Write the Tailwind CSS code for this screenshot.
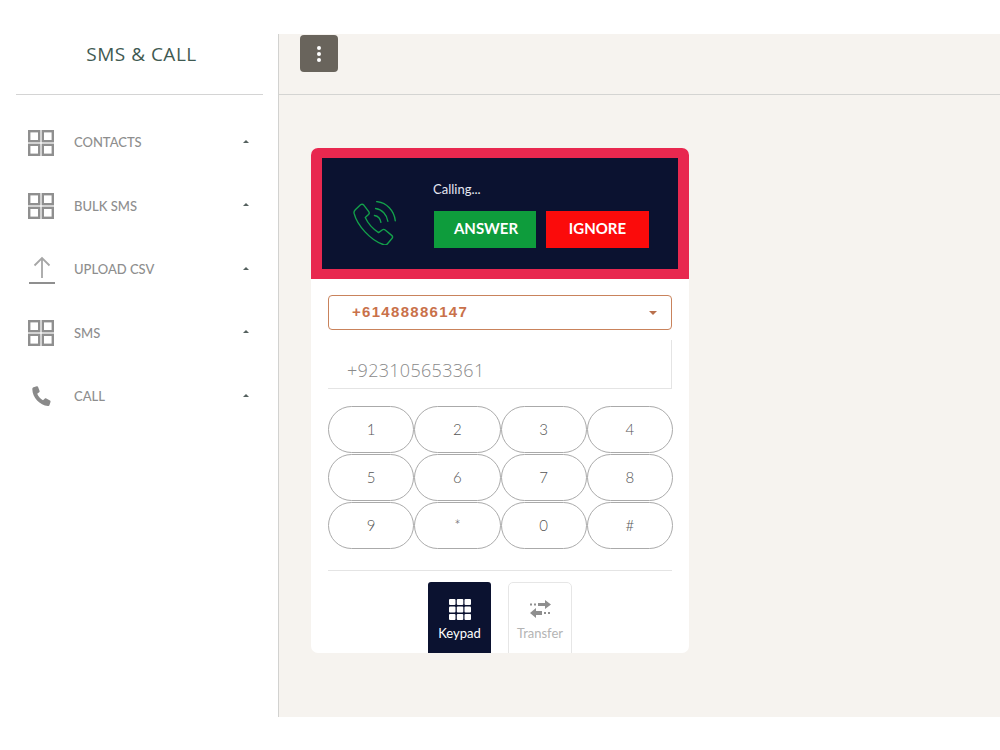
<!DOCTYPE html>
<html lang="en">
<head>
    <meta charset="UTF-8">
    <title>SMS &amp; Call</title>
    <script src="https://cdn.jsdelivr.net/npm/@tailwindcss/browser@4"></script>
</head>
<body class="bg-white font-['Lato',sans-serif]">
    <div class="w-[1000px] h-[750px] pt-[34px] overflow-hidden flex items-start">
        <!-- sidebar -->
        <aside class="w-[278px] h-[683px] shrink-0 px-[16px]">
            <div class="h-[61px] border-b border-[#d4d4d4] flex items-center justify-center pb-[19px] -mr-[1px] pl-[4px]">
                <h1 class="text-[19px] text-[#3f5a52] font-['Open_Sans',sans-serif] tracking-[0.5px]">SMS &amp; CALL</h1>
            </div>
            <nav class="pt-[16px] pl-[12px] pr-[13px] flex flex-col text-[#8e8e8e]">
                <div class="h-[63.5px] flex items-center">
                    <svg class="w-[26px] h-[26px] mr-[20px]" viewBox="0 0 26 26" fill="none" stroke="#8f8f8f" stroke-width="2.400"><rect x="1.200" y="1.200" width="10" height="10"/><rect x="14.800" y="1.200" width="10" height="10"/><rect x="1.200" y="14.800" width="10" height="10"/><rect x="14.800" y="14.800" width="10" height="10"/></svg>
                    <span class="flex-1 text-[13px] font-medium">CONTACTS</span>
                    <span class="w-0 h-0 border-x-[3.5px] border-x-transparent border-b-[3.5px] border-b-[#55615f] mb-[3px]"></span>
                </div>
                <div class="h-[63.5px] flex items-center">
                    <svg class="w-[26px] h-[26px] mr-[20px]" viewBox="0 0 26 26" fill="none" stroke="#8f8f8f" stroke-width="2.400"><rect x="1.200" y="1.200" width="10" height="10"/><rect x="14.800" y="1.200" width="10" height="10"/><rect x="1.200" y="14.800" width="10" height="10"/><rect x="14.800" y="14.800" width="10" height="10"/></svg>
                    <span class="flex-1 text-[13px] font-medium">BULK SMS</span>
                    <span class="w-0 h-0 border-x-[3.5px] border-x-transparent border-b-[3.5px] border-b-[#55615f] mb-[3px]"></span>
                </div>
                <div class="h-[63.5px] flex items-center">
                    <svg class="w-[28px] h-[28px] mr-[18px]" viewBox="0 0 28 28" fill="none" stroke="#a6a6a6"><path d="M14 22V2M6.500 9.500L14 2l7.500 7.500" stroke-width="1.800"/><path d="M1 27h26" stroke-width="2" stroke="#8f8f8f"/></svg>
                    <span class="flex-1 text-[13px] font-medium">UPLOAD CSV</span>
                    <span class="w-0 h-0 border-x-[3.5px] border-x-transparent border-b-[3.5px] border-b-[#55615f] mb-[3px]"></span>
                </div>
                <div class="h-[63.5px] flex items-center">
                    <svg class="w-[26px] h-[26px] mr-[20px]" viewBox="0 0 26 26" fill="none" stroke="#8f8f8f" stroke-width="2.400"><rect x="1.200" y="1.200" width="10" height="10"/><rect x="14.800" y="1.200" width="10" height="10"/><rect x="1.200" y="14.800" width="10" height="10"/><rect x="14.800" y="14.800" width="10" height="10"/></svg>
                    <span class="flex-1 text-[13px] font-medium">SMS</span>
                    <span class="w-0 h-0 border-x-[3.5px] border-x-transparent border-b-[3.5px] border-b-[#55615f] mb-[3px]"></span>
                </div>
                <div class="h-[63.5px] flex items-center">
                    <svg class="w-[26px] h-[26px] mr-[20px]" viewBox="0 0 26 26" fill="#8a8a8a"><path d="M5.500 3.200l3.300-.9c.6-.2 1.100.1 1.300.6l1.500 4c.2.500 0 1-.4 1.300l-2 1.500c1.200 2.800 3.200 5.100 5.800 6.600l1.900-1.700c.4-.3.900-.4 1.400-.1l3.700 2.100c.5.300.7.800.5 1.300l-1 3.100c-.2.700-.9 1.100-1.600 1C11.900 21.200 4.400 13.600 4.300 5c0-.8.500-1.500 1.200-1.800z"/></svg>
                    <span class="flex-1 text-[13px] font-medium">CALL</span>
                    <span class="w-0 h-0 border-x-[3.5px] border-x-transparent border-b-[3.5px] border-b-[#55615f] mb-[3px]"></span>
                </div>
            </nav>
        </aside>

        <!-- main -->
        <main class="flex-1 h-[683px] bg-[#f6f3ef] border-l border-[#d2d2d0]">
            <div class="h-[61px] border-b border-[#d4d4d2] pl-[21px] pt-[1px]">
                <button class="w-[38px] h-[37px] bg-[#69645c] rounded-[4px] flex flex-col items-center justify-center gap-[2px]">
                    <span class="w-[4px] h-[4px] rounded-full bg-white"></span>
                    <span class="w-[4px] h-[4px] rounded-full bg-white"></span>
                    <span class="w-[4px] h-[4px] rounded-full bg-white"></span>
                </button>
            </div>

            <div class="pl-[32px] pt-[53px]">
                <div class="w-[378px] h-[505px] bg-white rounded-[7px] overflow-hidden">
                    <!-- incoming call -->
                    <div class="h-[131px] bg-[#e8284f] px-[11px] pt-[10px]">
                        <div class="h-[111px] bg-[#0b1230] flex">
                            <div class="w-[112px] flex items-center pl-[31px] pt-[18px]">
                                <svg class="w-[44px] h-[44px]" viewBox="1 1 38 38" fill="none" stroke="#13a04a" stroke-width="1.200" stroke-linecap="round" stroke-linejoin="round">
                                    <path d="M3 8.500l4.500-4.200c.9-.8 2-.7 2.800.2l4.300 5.700c.6.800.5 1.800-.2 2.500l-2.800 2.600c1.700 3.700 6.300 9.700 11.500 13l3.100-2.300c.8-.6 1.800-.6 2.600 0l5.600 4.700c.8.700.9 1.900.2 2.700l-3.800 4.500c-.8.900-2.100 1.300-3.200.9C16 35 4.500 22 1.900 11.500c-.2-1.100.3-2.200 1.100-3z"/>
                                    <path d="M19.500 13.500c2.900.5 5.200 3 5.600 6"/>
                                    <path d="M20.500 7.500c5.600.7 9.800 5.300 10.600 11"/>
                                    <path d="M21.500 1.500c8.500.9 15.100 7.700 16 16.500"/>
                                </svg>
                            </div>
                            <div class="pt-[23px]">
                                <p class="text-[13px] leading-[16px] text-[#e6e8f2] -ml-[1px]">Calling...</p>
                                <div class="flex gap-[10px] mt-[14px]">
                                    <button class="w-[102px] h-[37px] bg-[#0e9c3c] text-white text-[15px] font-bold pb-[2px] pl-[2px]">ANSWER</button>
                                    <button class="w-[103px] h-[37px] bg-[#fb0b0b] text-white text-[15px] font-bold pb-[2px]">IGNORE</button>
                                </div>
                            </div>
                        </div>
                    </div>

                    <div class="px-[17px]">
                        <!-- caller id -->
                        <div class="mt-[16px] h-[35px] border border-[#c9835c] rounded-[4px] flex items-center justify-between pl-[23px] pr-[14px]">
                            <span class="font-['Liberation_Sans',sans-serif] text-[15px] font-bold tracking-[1.300px] text-[#c9714a]">+61488886147</span>
                            <span class="w-0 h-0 border-x-[4px] border-x-transparent border-t-[4px] border-t-[#b9704d]"></span>
                        </div>

                        <!-- number -->
                        <div class="mt-[10px] h-[49px] border-b border-r border-[#e4e4e4] flex items-end pl-[19px] pb-[4px] text-[18px] text-[#8a8a8a] font-['Open_Sans',sans-serif] font-light tracking-[0.300px]">+923105653361</div>

                        <!-- keypad -->
                        <div class="mt-[17px] -mr-[1px] grid grid-cols-4 gap-y-[1px] text-[15px] text-[#555555] font-light">
                            <button class="h-[47px] border border-[#aaaaaa] rounded-full">1</button>
                            <button class="h-[47px] border border-[#aaaaaa] rounded-full">2</button>
                            <button class="h-[47px] border border-[#aaaaaa] rounded-full">3</button>
                            <button class="h-[47px] border border-[#aaaaaa] rounded-full">4</button>
                            <button class="h-[47px] border border-[#aaaaaa] rounded-full">5</button>
                            <button class="h-[47px] border border-[#aaaaaa] rounded-full">6</button>
                            <button class="h-[47px] border border-[#aaaaaa] rounded-full">7</button>
                            <button class="h-[47px] border border-[#aaaaaa] rounded-full">8</button>
                            <button class="h-[47px] border border-[#aaaaaa] rounded-full">9</button>
                            <button class="h-[47px] border border-[#aaaaaa] rounded-full">*</button>
                            <button class="h-[47px] border border-[#aaaaaa] rounded-full">0</button>
                            <button class="h-[47px] border border-[#aaaaaa] rounded-full">#</button>
                        </div>

                        <div class="mt-[21px] border-t border-[#e4e4e4] pt-[11px] flex pl-[100px] gap-[17px]">
                            <button class="w-[63px] h-[80px] bg-[#0b1230] rounded-[3px] flex flex-col items-center pt-[17px] text-white text-[13px]">
                                <svg class="w-[22px] h-[21px]" viewBox="0 0 22 21" fill="#fff"><rect x="0" y="0" width="6.500" height="6" rx="1"/><rect x="7.800" y="0" width="6.500" height="6" rx="1"/><rect x="15.500" y="0" width="6.500" height="6" rx="1"/><rect x="0" y="7.500" width="6.500" height="6" rx="1"/><rect x="7.800" y="7.500" width="6.500" height="6" rx="1"/><rect x="15.500" y="7.500" width="6.500" height="6" rx="1"/><rect x="0" y="15" width="6.500" height="6" rx="1"/><rect x="7.800" y="15" width="6.500" height="6" rx="1"/><rect x="15.500" y="15" width="6.500" height="6" rx="1"/></svg>
                                <span class="mt-[4px]">Keypad</span>
                            </button>
                            <button class="w-[64px] h-[80px] border border-[#e6e6e6] rounded-[5px] flex flex-col items-center pt-[17px] text-[#b4b4b4] text-[13px]">
                                <svg class="w-[22px] h-[19px]" viewBox="0 0 22 19" fill="#8f8f8f"><path d="M9 3h7V0l6 4.500L16 9V6H9z"/><path d="M13 11H7V8l-6 5 6 5v-3h6z"/><rect x="1" y="3.500" width="2" height="2"/><rect x="5" y="3.500" width="2" height="2"/><rect x="15" y="12" width="2" height="2"/><rect x="19" y="12" width="2" height="2"/></svg>
                                <span class="mt-[5px]">Transfer</span>
                            </button>
                        </div>
                    </div>
                </div>
            </div>
        </main>
    </div>
</body>
</html>
